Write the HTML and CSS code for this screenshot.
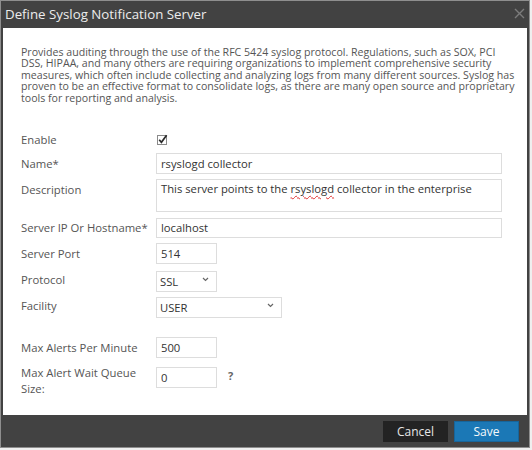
FILE: index.html
```html
<!DOCTYPE html>
<html lang="en">
<head>
<meta charset="utf-8">
<title>Define Syslog Notification Server</title>
<link rel="stylesheet" href="styles.css">
</head>
<body>
<div class="dialog">
  <div class="titlebar">
    <h1 class="title">Define Syslog Notification Server</h1>
    <svg class="close" width="11" height="11" viewBox="0 0 11 11" aria-label="Close">
      <path d="M1 1 L10 10 M10 1 L1 10" stroke="#7c7c7c" stroke-width="1.4" fill="none"/>
    </svg>
  </div>
  <div class="content">
    <p class="intro">Provides auditing through the use of the RFC 5424 syslog protocol. Regulations, such as SOX, PCI DSS, HIPAA, and many others are requiring organizations to implement comprehensive security measures, which often include collecting and analyzing logs from many different sources. Syslog has proven to be an effective format to consolidate logs, as there are many open source and proprietary tools for reporting and analysis.</p>
    <div class="form">
      <div class="row row-enable">
        <label class="label">Enable</label>
        <svg class="check" width="12" height="12" viewBox="0 0 12 12">
          <rect x="0.5" y="1.5" width="9" height="9" fill="#fff" stroke="#8a8a8a"/>
          <path d="M2.2 5.8 L4.4 8.3 L9.6 1.2" stroke="#2b2b2b" stroke-width="1.7" fill="none"/>
        </svg>
      </div>
      <div class="row">
        <label class="label">Name*</label>
        <input class="input wide" type="text" value="rsyslogd collector">
      </div>
      <div class="row row-desc">
        <label class="label">Description</label>
        <div class="input wide area">This server points to the <span class="spell">rsyslogd</span> collector in the enterprise</div>
      </div>
      <div class="row">
        <label class="label">Server IP Or Hostname*</label>
        <input class="input wide short" type="text" value="localhost">
      </div>
      <div class="row">
        <label class="label">Server Port</label>
        <input class="input small" type="text" value="514">
      </div>
      <div class="row">
        <label class="label">Protocol</label>
        <span class="select-wrap small">
          <select class="select"><option>SSL</option></select>
          <svg class="chev" width="7" height="5" viewBox="0 0 7 5"><path d="M1 1 L3.5 3.5 L6 1" stroke="#666" stroke-width="1.2" fill="none"/></svg>
        </span>
      </div>
      <div class="row">
        <label class="label">Facility</label>
        <span class="select-wrap medium">
          <select class="select"><option>USER</option></select>
          <svg class="chev" width="7" height="5" viewBox="0 0 7 5"><path d="M1 1 L3.5 3.5 L6 1" stroke="#666" stroke-width="1.2" fill="none"/></svg>
        </span>
      </div>
      <div class="row row-gap">
        <label class="label">Max Alerts Per Minute</label>
        <input class="input small" type="text" value="500">
      </div>
      <div class="row row-queue">
        <label class="label two">Max Alert Wait Queue Size:</label>
        <input class="input small" type="text" value="0">
        <span class="help">?</span>
      </div>
    </div>
  </div>
  <div class="footer">
    <button class="btn btn-cancel">Cancel</button>
    <button class="btn btn-save">Save</button>
  </div>
</div>
</body>
</html>
```
FILE: styles.css
```css
html, body {
  margin: 0;
  padding: 0;
  background: #efefef;
}
body {
  font-family: "Open Sans", "Noto Sans", sans-serif;
}
.dialog {
  box-sizing: border-box;
  width: 530px;
  height: 448px;
  border: 1px solid #8e8e8e;
  background: #424242;
  display: flex;
  flex-direction: column;
}
.titlebar {
  height: 27px;
  display: flex;
  align-items: center;
  justify-content: space-between;
  padding: 0 4px 0 4px;
  flex: none;
}
.title {
  margin: 0;
  font-size: 13.3px;
  font-weight: normal;
  color: #ececec;
  line-height: 27px;
}
.close {
  margin-top: -2px;
}
.content {
  background: #fff;
  margin: 0 2px;
  height: 387px;
  flex: none;
  box-sizing: border-box;
  padding: 19px 12px 0 18px;
}
.intro {
  margin: 0 0 27px 0;
  font-size: 10.6px;
  line-height: 11.4px;
  color: #555;
}
.form {
  display: flex;
  flex-direction: column;
}
.row {
  display: flex;
  align-items: center;
  margin-top: 5px;
  min-height: 21px;
}
.row-enable {
  margin-top: 0;
  height: 17px;
  min-height: 17px;
}
.label {
  width: 135px;
  flex: none;
  font-size: 11.3px;
  color: #555;
  line-height: 16px;
}
.check {
  margin-left: 1px;
  margin-top: 1px;
}
.input {
  box-sizing: border-box;
  height: 21px;
  border: 1px solid #ddd;
  background: #fff;
  font-family: "Open Sans", "Noto Sans", sans-serif;
  font-size: 11.25px;
  color: #333;
  padding: 0 4px;
  margin: 0;
  outline: none;
}
.wide {
  width: 346px;
}
.short {
  height: 20px;
}
.area {
  height: 33px;
  line-height: 16px;
  padding-top: 1px;
  align-self: flex-start;
}
.row-desc {
  align-items: flex-start;
}
.row-desc .label {
  line-height: 22px;
}
.spell {
  text-decoration: underline wavy #e03030;
  text-decoration-thickness: 1px;
  text-underline-offset: 2px;
}
.small {
  width: 61px;
}
.medium {
  width: 126px;
}
.select-wrap {
  position: relative;
  display: inline-block;
  height: 21px;
}
.select {
  appearance: none;
  -webkit-appearance: none;
  box-sizing: border-box;
  width: 100%;
  height: 21px;
  border: 1px solid #ddd;
  background: #fff;
  font-family: "Open Sans", "Noto Sans", sans-serif;
  font-size: 11.25px;
  color: #333;
  padding: 0 3px;
  margin: 0;
  border-radius: 0;
  outline: none;
}
.chev {
  position: absolute;
  right: 8px;
  top: 8px;
}
.row-gap {
  margin-top: 21px;
}
.row-queue {
  align-items: flex-start;
  margin-top: 7px;
}
.row-queue .input {
  margin-top: 2px;
}
.help {
  margin-left: 11px;
  margin-top: 3px;
  font-size: 11px;
  font-weight: bold;
  color: #666;
  line-height: 16px;
}
.footer {
  flex: 1;
  display: flex;
  justify-content: flex-end;
  align-items: flex-start;
  gap: 6px;
  padding: 6px 10px 0 0;
}
.btn {
  box-sizing: border-box;
  width: 65px;
  height: 21px;
  border: none;
  font-family: "Open Sans", "Noto Sans", sans-serif;
  font-size: 12px;
  padding: 0;
  margin: 0;
  cursor: pointer;
}
.btn-cancel {
  background: #232323;
  color: #e6e6e6;
}
.btn-save {
  background: #1b78b6;
  color: #f4f8fb;
  border: 1px solid #16659b;
}
```
